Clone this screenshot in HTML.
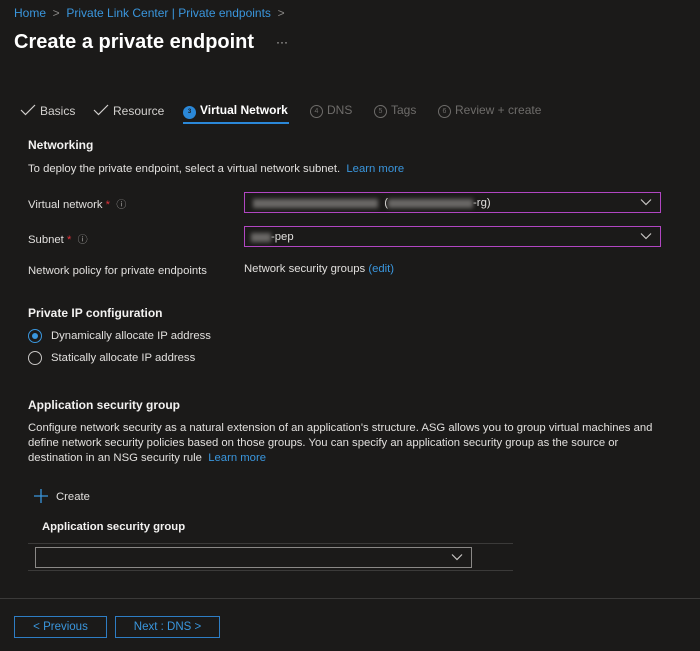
<!DOCTYPE html>
<html><head><style>
body{margin:0;width:700px;height:651px;background:#1b1a19;font-family:"Liberation Sans",sans-serif;color:#e1dfdd;position:relative;overflow:hidden;font-size:11.3px}
.a{position:absolute;white-space:nowrap}
.l{color:#3a96dd}
.b{font-weight:bold;color:#f3f2f1}
.sel{position:absolute;border:1px solid #b146c2;height:19px;background:#1b1a19}
.chev{position:absolute;right:8px;top:5px;width:12px;height:8px}
.grey{color:#6e6c6a}
.num{display:inline-block;width:11px;height:11px;border:1px solid #6e6c6a;border-radius:50%;font-size:7px;text-align:center;line-height:11px;margin-right:4px;vertical-align:1px}
.btn{position:absolute;top:616px;height:20px;border:1px solid #2e7dc4;color:#3a96dd;text-align:center;line-height:21px;font-size:11.5px}
.blur{display:inline-block;background:#6a6866;height:9px;filter:blur(2px);vertical-align:middle}
.ck{display:inline-block;vertical-align:-1px;margin-right:4px}
</style></head><body>
<div class="a l" style="left:14px;top:6px;font-size:12px">Home <span style="color:#8a8886">&nbsp;&gt;&nbsp;</span> Private Link Center | Private endpoints <span style="color:#8a8886">&nbsp;&gt;</span></div>
<div class="a" style="left:14px;top:31px;font-size:20px;font-weight:bold;color:#fff">Create a private endpoint</div>
<div class="a" style="left:276px;top:35px;font-size:12px;color:#c8c6c4">···</div>

<div class="a" style="left:20px;top:104px;font-size:12px;color:#d2d0ce"><svg class="ck" width="16" height="12" viewBox="0 0 16 12"><path d="M1 6l4.5 4.5L15 1" stroke="#d2d0ce" fill="none" stroke-width="1.2"/></svg>Basics</div>
<div class="a" style="left:93px;top:104px;font-size:12px;color:#d2d0ce"><svg class="ck" width="16" height="12" viewBox="0 0 16 12"><path d="M1 6l4.5 4.5L15 1" stroke="#d2d0ce" fill="none" stroke-width="1.2"/></svg>Resource</div>
<div class="a" style="left:183px;top:103px;font-size:12px;color:#fff;font-weight:bold"><span class="num" style="background:#2b88d8;border-color:#2b88d8;color:#1b1a19;font-size:6px">3</span>Virtual Network</div>
<div class="a" style="left:183px;top:122px;width:106px;height:2px;background:#2b88d8"></div>
<div class="a grey" style="left:310px;top:103px;font-size:12px"><span class="num">4</span>DNS</div>
<div class="a grey" style="left:374px;top:103px;font-size:12px"><span class="num">5</span>Tags</div>
<div class="a grey" style="left:438px;top:103px;font-size:12px"><span class="num">6</span>Review + create</div>

<div class="a b" style="left:28px;top:138px;font-size:12px">Networking</div>
<div class="a" style="left:28px;top:163px">To deploy the private endpoint, select a virtual network subnet. &nbsp;<span class="l">Learn more</span></div>

<div class="a" style="left:28px;top:196px">Virtual network <span style="color:#e0323a">*</span> &nbsp;<span style="color:#a19f9d;font-size:10px">ⓘ</span></div>
<div class="sel" style="left:244px;top:192px;width:415px"><span class="a" style="left:8px;top:4px;color:#e1dfdd"><span class="blur" style="width:125px"></span> &nbsp;(<span class="blur" style="width:85px"></span>-rg)</span><svg class="chev" viewBox="0 0 12 8"><path d="M1 1.5l5 5 5-5" stroke="#c8c6c4" fill="none" stroke-width="1.2"/></svg></div>
<div class="a" style="left:28px;top:231px">Subnet <span style="color:#e0323a">*</span> &nbsp;<span style="color:#a19f9d;font-size:10px">ⓘ</span></div>
<div class="sel" style="left:244px;top:226px;width:415px"><span class="a" style="left:6px;top:4px"><span class="blur" style="width:20px"></span>-pep</span><svg class="chev" viewBox="0 0 12 8"><path d="M1 1.5l5 5 5-5" stroke="#c8c6c4" fill="none" stroke-width="1.2"/></svg></div>
<div class="a" style="left:28px;top:265px">Network policy for private endpoints</div>
<div class="a" style="left:244px;top:263px">Network security groups <span class="l">(edit)</span></div>

<div class="a b" style="left:28px;top:306px;font-size:12px">Private IP configuration</div>
<div class="a" style="left:28px;top:329px;width:12px;height:12px;border:1px solid #3a96dd;border-radius:50%"></div>
<div class="a" style="left:32px;top:333px;width:6px;height:6px;background:#3a96dd;border-radius:50%"></div>
<div class="a" style="left:51px;top:330px">Dynamically allocate IP address</div>
<div class="a" style="left:28px;top:351px;width:12px;height:12px;border:1px solid #c8c6c4;border-radius:50%"></div>
<div class="a" style="left:51px;top:352px">Statically allocate IP address</div>

<div class="a b" style="left:28px;top:398px;font-size:12px">Application security group</div>
<div class="a" style="left:28px;top:421px;line-height:15px">Configure network security as a natural extension of an application's structure. ASG allows you to group virtual machines and<br>define network security policies based on those groups. You can specify an application security group as the source or<br>destination in an NSG security rule &nbsp;<span class="l">Learn more</span></div>

<svg class="a" style="left:34px;top:489px" width="14" height="14" viewBox="0 0 14 14"><path d="M7 0v14M0 7h14" stroke="#3a96dd" stroke-width="1.3"/></svg>
<div class="a" style="left:56px;top:491px">Create</div>
<div class="a b" style="left:42px;top:521px">Application security group</div>
<div class="a" style="left:28px;top:543px;width:485px;height:1px;background:#3b3a39"></div>
<div class="sel" style="left:35px;top:547px;width:435px;border-color:#8a8886"><svg class="chev" viewBox="0 0 12 8"><path d="M1 1.5l5 5 5-5" stroke="#c8c6c4" fill="none" stroke-width="1.2"/></svg></div>
<div class="a" style="left:28px;top:570px;width:485px;height:1px;background:#3b3a39"></div>
<div class="a" style="left:0;top:598px;width:700px;height:1px;background:#3b3a39"></div>
<div class="btn" style="left:14px;width:91px">&lt; Previous</div>
<div class="btn" style="left:115px;width:103px">Next : DNS &gt;</div>
</body></html>
